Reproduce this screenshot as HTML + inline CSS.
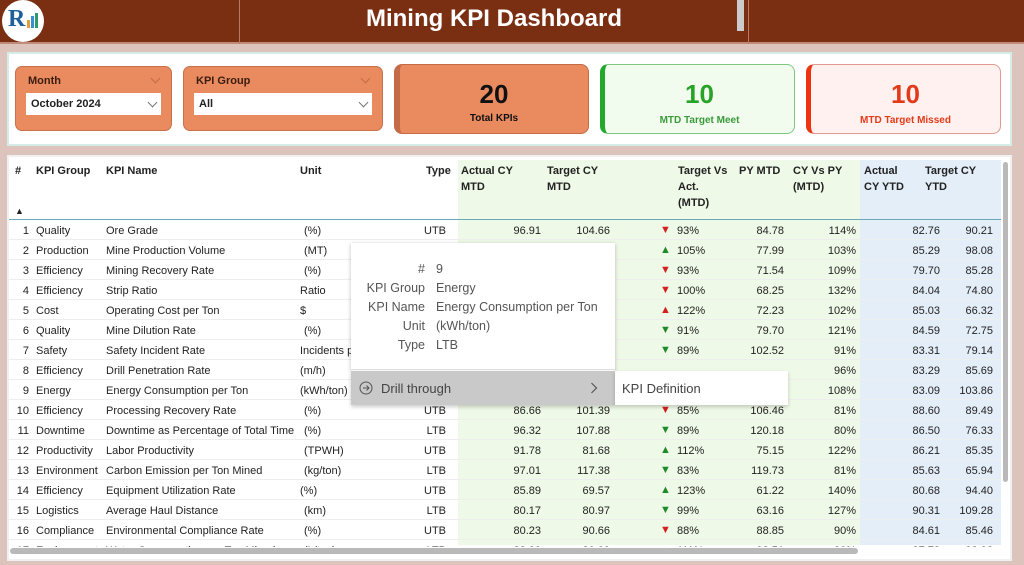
<!DOCTYPE html>
<html><head><meta charset="utf-8"><style>
*{margin:0;padding:0;box-sizing:border-box}
body{width:1024px;height:565px;overflow:hidden;background:#dcc3bc;font-family:"Liberation Sans",sans-serif;position:relative;color:#222}
.a{position:absolute}
.hdr{left:0;top:0;width:1024px;height:44px;background:#7a2e12;border-bottom:2px solid #c08a78}
.title{left:240px;width:508px;top:5px;text-align:center;color:#fff;font-weight:bold;font-size:24px}
.panel{background:#fff;border:2px solid #d6ece9}
.sl{background:#e98b5f;border:1px solid #c7714a;border-radius:7px}
.sl .lb{position:absolute;left:12px;top:8px;font-size:11px;font-weight:bold;color:#3a1c10}
.sl .dd{position:absolute;left:10px;top:26px;background:#fff;height:22px;font-size:11px;font-weight:bold;padding:5px 5px}
.chev{position:absolute;width:7px;height:7px;border-right:1.3px solid #777;border-bottom:1.3px solid #777;transform:rotate(45deg)}
.card{border-radius:8px;text-align:center}
.big{font-size:26px;font-weight:bold;position:absolute;left:0;right:0;top:14px}
.sm{font-size:10px;font-weight:bold;position:absolute;left:0;right:0;top:50px}
.row{position:absolute;left:9px;width:992px;height:20px;border-bottom:1px solid #eee;font-size:11px}
.row span{position:absolute;top:5px;white-space:nowrap}
.r{text-align:right}
.th{font-size:11px;font-weight:bold;line-height:16px;color:#222}
.up,.dng{color:#1e8a2a}.upr,.dn{color:#d32020}
.row span.up,.row span.dng,.row span.upr,.row span.dn{font-size:11px;top:4px}
</style></head><body>
<div class="a hdr"></div>
<div class="a" style="left:239px;top:0;width:1px;height:44px;background:#b87a64"></div>
<div class="a" style="left:748px;top:0;width:1px;height:44px;background:#b87a64"></div>
<div class="a" style="left:737px;top:0;width:7px;height:31px;background:#ccc"></div>
<div class="a" style="left:2px;top:0;width:42px;height:42px;border-radius:50%;background:#fff"></div>
<div class="a" style="left:8px;top:6px;font:bold 24px 'Liberation Serif',serif;color:#1f5f9c">R</div>
<div class="a" style="left:27px;top:20px;width:3px;height:8px;background:#e2a23a"></div>
<div class="a" style="left:31px;top:16px;width:3px;height:12px;background:#3a8fd0"></div>
<div class="a" style="left:35px;top:13px;width:3px;height:15px;background:#2c9a6d"></div>
<div class="a title">Mining KPI Dashboard</div>

<div class="a panel" style="left:7px;top:52px;width:1005px;height:94px"></div>
<div class="a sl" style="left:15px;top:66px;width:157px;height:65px"><div class="lb">Month</div><div class="chev" style="left:136px;top:8px;border-color:#c46a45"></div><div class="dd" style="width:135px">October 2024</div><div class="chev" style="left:133px;top:32px"></div></div>
<div class="a sl" style="left:183px;top:66px;width:200px;height:65px"><div class="lb">KPI Group</div><div class="chev" style="left:178px;top:8px;border-color:#c46a45"></div><div class="dd" style="width:178px">All</div><div class="chev" style="left:176px;top:32px"></div></div>
<div class="a card" style="left:394px;top:64px;width:195px;height:70px;background:#e98b5f;border:1px solid #c26b46;border-left:6px solid #c26b46"><div class="big" style="color:#111">20</div><div class="sm" style="top:48px;color:#111">Total KPIs</div></div>
<div class="a card" style="left:600px;top:64px;width:195px;height:70px;background:#f1fcef;border:1px solid #7fc77f;border-left:5px solid #22a82a"><div class="big" style="color:#27a327">10</div><div class="sm" style="color:#3a9a3a">MTD Target Meet</div></div>
<div class="a card" style="left:806px;top:64px;width:195px;height:70px;background:#fef1ef;border:1px solid #e29a90;border-left:5px solid #ee3311"><div class="big" style="color:#e33a1a">10</div><div class="sm" style="color:#e33a1a">MTD Target Missed</div></div>

<div class="a panel" style="left:7px;top:155px;width:1005px;height:406px;border-color:#f0f0f0"></div>
<div class="a" style="left:458px;top:160px;width:402px;height:385px;background:#eff9e7"></div>
<div class="a" style="left:860px;top:160px;width:141px;height:385px;background:#e4eef8"></div>
<div class="a th" style="left:15px;top:163px">#</div>
<div class="a th" style="left:36px;top:163px">KPI Group</div>
<div class="a th" style="left:106px;top:163px">KPI Name</div>
<div class="a th" style="left:300px;top:163px">Unit</div>
<div class="a th" style="left:426px;top:163px">Type</div>
<div class="a th" style="left:461px;top:163px">Actual CY<br>MTD</div>
<div class="a th" style="left:547px;top:163px">Target CY<br>MTD</div>
<div class="a th" style="left:678px;top:163px">Target Vs<br>Act.<br>(MTD)</div>
<div class="a th" style="left:739px;top:163px">PY MTD</div>
<div class="a th" style="left:793px;top:163px">CY Vs PY<br>(MTD)</div>
<div class="a th" style="left:864px;top:163px">Actual<br>CY YTD</div>
<div class="a th" style="left:925px;top:163px">Target CY<br>YTD</div>
<div class="a" style="left:15px;top:206px;font-size:9px">▲</div>
<div class="a" style="left:9px;top:219px;width:992px;height:1px;background:#6aa7b8"></div>

<div class="row" style="top:220px"><span class="r" style="left:0;width:20px">1</span><span style="left:27px">Quality</span><span style="left:97px">Ore Grade</span><span style="left:295px">(%)</span><span class="r" style="left:400px;width:37px">UTB</span><span class="r" style="left:460px;width:72px">96.91</span><span class="r" style="left:530px;width:71px">104.66</span><span class="dn" style="left:651px">▼</span><span style="left:668px">93%</span><span class="r" style="left:700px;width:75px">84.78</span><span class="r" style="left:780px;width:67px">114%</span><span class="r" style="left:860px;width:71px">82.76</span><span class="r" style="left:920px;width:64px">90.21</span></div>
<div class="row" style="top:240px"><span class="r" style="left:0;width:20px">2</span><span style="left:27px">Production</span><span style="left:97px">Mine Production Volume</span><span style="left:295px">(MT)</span><span class="up" style="left:651px">▲</span><span style="left:668px">105%</span><span class="r" style="left:700px;width:75px">77.99</span><span class="r" style="left:780px;width:67px">103%</span><span class="r" style="left:860px;width:71px">85.29</span><span class="r" style="left:920px;width:64px">98.08</span></div>
<div class="row" style="top:260px"><span class="r" style="left:0;width:20px">3</span><span style="left:27px">Efficiency</span><span style="left:97px">Mining Recovery Rate</span><span style="left:295px">(%)</span><span class="dn" style="left:651px">▼</span><span style="left:668px">93%</span><span class="r" style="left:700px;width:75px">71.54</span><span class="r" style="left:780px;width:67px">109%</span><span class="r" style="left:860px;width:71px">79.70</span><span class="r" style="left:920px;width:64px">85.28</span></div>
<div class="row" style="top:280px"><span class="r" style="left:0;width:20px">4</span><span style="left:27px">Efficiency</span><span style="left:97px">Strip Ratio</span><span style="left:291px">Ratio</span><span class="dn" style="left:651px">▼</span><span style="left:668px">100%</span><span class="r" style="left:700px;width:75px">68.25</span><span class="r" style="left:780px;width:67px">132%</span><span class="r" style="left:860px;width:71px">84.04</span><span class="r" style="left:920px;width:64px">74.80</span></div>
<div class="row" style="top:300px"><span class="r" style="left:0;width:20px">5</span><span style="left:27px">Cost</span><span style="left:97px">Operating Cost per Ton</span><span style="left:291px">$</span><span class="upr" style="left:651px">▲</span><span style="left:668px">122%</span><span class="r" style="left:700px;width:75px">72.23</span><span class="r" style="left:780px;width:67px">102%</span><span class="r" style="left:860px;width:71px">85.03</span><span class="r" style="left:920px;width:64px">66.32</span></div>
<div class="row" style="top:320px"><span class="r" style="left:0;width:20px">6</span><span style="left:27px">Quality</span><span style="left:97px">Mine Dilution Rate</span><span style="left:295px">(%)</span><span class="dng" style="left:651px">▼</span><span style="left:668px">91%</span><span class="r" style="left:700px;width:75px">79.70</span><span class="r" style="left:780px;width:67px">121%</span><span class="r" style="left:860px;width:71px">84.59</span><span class="r" style="left:920px;width:64px">72.75</span></div>
<div class="row" style="top:340px"><span class="r" style="left:0;width:20px">7</span><span style="left:27px">Safety</span><span style="left:97px">Safety Incident Rate</span><span style="left:291px">Incidents p</span><span class="dng" style="left:651px">▼</span><span style="left:668px">89%</span><span class="r" style="left:700px;width:75px">102.52</span><span class="r" style="left:780px;width:67px">91%</span><span class="r" style="left:860px;width:71px">83.31</span><span class="r" style="left:920px;width:64px">79.14</span></div>
<div class="row" style="top:360px"><span class="r" style="left:0;width:20px">8</span><span style="left:27px">Efficiency</span><span style="left:97px">Drill Penetration Rate</span><span style="left:291px">(m/h)</span><span class="r" style="left:780px;width:67px">96%</span><span class="r" style="left:860px;width:71px">83.29</span><span class="r" style="left:920px;width:64px">85.69</span></div>
<div class="row" style="top:380px"><span class="r" style="left:0;width:20px">9</span><span style="left:27px">Energy</span><span style="left:97px">Energy Consumption per Ton</span><span style="left:291px">(kWh/ton)</span><span class="r" style="left:780px;width:67px">108%</span><span class="r" style="left:860px;width:71px">83.09</span><span class="r" style="left:920px;width:64px">103.86</span></div>
<div class="row" style="top:400px"><span class="r" style="left:0;width:20px">10</span><span style="left:27px">Efficiency</span><span style="left:97px">Processing Recovery Rate</span><span style="left:295px">(%)</span><span class="r" style="left:400px;width:37px">UTB</span><span class="r" style="left:460px;width:72px">86.66</span><span class="r" style="left:530px;width:71px">101.39</span><span class="dn" style="left:651px">▼</span><span style="left:668px">85%</span><span class="r" style="left:700px;width:75px">106.46</span><span class="r" style="left:780px;width:67px">81%</span><span class="r" style="left:860px;width:71px">88.60</span><span class="r" style="left:920px;width:64px">89.49</span></div>
<div class="row" style="top:420px"><span class="r" style="left:0;width:20px">11</span><span style="left:27px">Downtime</span><span style="left:97px">Downtime as Percentage of Total Time</span><span style="left:295px">(%)</span><span class="r" style="left:400px;width:37px">LTB</span><span class="r" style="left:460px;width:72px">96.32</span><span class="r" style="left:530px;width:71px">107.88</span><span class="dng" style="left:651px">▼</span><span style="left:668px">89%</span><span class="r" style="left:700px;width:75px">120.18</span><span class="r" style="left:780px;width:67px">80%</span><span class="r" style="left:860px;width:71px">86.50</span><span class="r" style="left:920px;width:64px">76.33</span></div>
<div class="row" style="top:440px"><span class="r" style="left:0;width:20px">12</span><span style="left:27px">Productivity</span><span style="left:97px">Labor Productivity</span><span style="left:295px">(TPWH)</span><span class="r" style="left:400px;width:37px">UTB</span><span class="r" style="left:460px;width:72px">91.78</span><span class="r" style="left:530px;width:71px">81.68</span><span class="up" style="left:651px">▲</span><span style="left:668px">112%</span><span class="r" style="left:700px;width:75px">75.15</span><span class="r" style="left:780px;width:67px">122%</span><span class="r" style="left:860px;width:71px">86.21</span><span class="r" style="left:920px;width:64px">85.35</span></div>
<div class="row" style="top:460px"><span class="r" style="left:0;width:20px">13</span><span style="left:27px">Environment</span><span style="left:97px">Carbon Emission per Ton Mined</span><span style="left:295px">(kg/ton)</span><span class="r" style="left:400px;width:37px">LTB</span><span class="r" style="left:460px;width:72px">97.01</span><span class="r" style="left:530px;width:71px">117.38</span><span class="dng" style="left:651px">▼</span><span style="left:668px">83%</span><span class="r" style="left:700px;width:75px">119.73</span><span class="r" style="left:780px;width:67px">81%</span><span class="r" style="left:860px;width:71px">85.63</span><span class="r" style="left:920px;width:64px">65.94</span></div>
<div class="row" style="top:480px"><span class="r" style="left:0;width:20px">14</span><span style="left:27px">Efficiency</span><span style="left:97px">Equipment Utilization Rate</span><span style="left:291px">(%)</span><span class="r" style="left:400px;width:37px">UTB</span><span class="r" style="left:460px;width:72px">85.89</span><span class="r" style="left:530px;width:71px">69.57</span><span class="up" style="left:651px">▲</span><span style="left:668px">123%</span><span class="r" style="left:700px;width:75px">61.22</span><span class="r" style="left:780px;width:67px">140%</span><span class="r" style="left:860px;width:71px">80.68</span><span class="r" style="left:920px;width:64px">94.40</span></div>
<div class="row" style="top:500px"><span class="r" style="left:0;width:20px">15</span><span style="left:27px">Logistics</span><span style="left:97px">Average Haul Distance</span><span style="left:295px">(km)</span><span class="r" style="left:400px;width:37px">LTB</span><span class="r" style="left:460px;width:72px">80.17</span><span class="r" style="left:530px;width:71px">80.97</span><span class="dng" style="left:651px">▼</span><span style="left:668px">99%</span><span class="r" style="left:700px;width:75px">63.16</span><span class="r" style="left:780px;width:67px">127%</span><span class="r" style="left:860px;width:71px">90.31</span><span class="r" style="left:920px;width:64px">109.28</span></div>
<div class="row" style="top:520px"><span class="r" style="left:0;width:20px">16</span><span style="left:27px">Compliance</span><span style="left:97px">Environmental Compliance Rate</span><span style="left:295px">(%)</span><span class="r" style="left:400px;width:37px">UTB</span><span class="r" style="left:460px;width:72px">80.23</span><span class="r" style="left:530px;width:71px">90.66</span><span class="dn" style="left:651px">▼</span><span style="left:668px">88%</span><span class="r" style="left:700px;width:75px">88.85</span><span class="r" style="left:780px;width:67px">90%</span><span class="r" style="left:860px;width:71px">84.61</span><span class="r" style="left:920px;width:64px">85.46</span></div>
<div class="row" style="top:540px;height:7px;overflow:hidden;border:0"><span class="r" style="left:0;width:20px">17</span><span style="left:27px">Environment</span><span style="left:97px">Water Consumption per Ton Mined</span><span style="left:295px">(L/ton)</span><span class="r" style="left:400px;width:37px">LTB</span><span class="r" style="left:460px;width:72px">88.99</span><span class="r" style="left:530px;width:71px">80.09</span><span class="upr" style="left:651px">▲</span><span style="left:668px">111%</span><span class="r" style="left:700px;width:75px">98.51</span><span class="r" style="left:780px;width:67px">90%</span><span class="r" style="left:860px;width:71px">87.78</span><span class="r" style="left:920px;width:64px">93.92</span></div>
<div class="a" style="left:9px;top:547px;width:992px;height:12px;background:#fff"></div>
<div class="a" style="left:10px;top:548px;width:848px;height:6px;border-radius:3px;background:#b9b9b9"></div>
<div class="a" style="left:1003px;top:162px;width:5px;height:320px;border-radius:3px;background:#b9b9b9"></div>

<div class="a" style="left:351px;top:243px;width:264px;height:128px;background:#fff;box-shadow:0 1px 4px rgba(0,0,0,.25)"></div>
<div class="a" style="left:351px;top:243px;width:74px;font-size:12.5px;color:#555;text-align:right;line-height:19px;padding-top:17px">#<br>KPI Group<br>KPI Name<br>Unit<br>Type</div>
<div class="a" style="left:436px;top:243px;font-size:12.5px;color:#555;line-height:19px;padding-top:17px">9<br>Energy<br>Energy Consumption per Ton<br>(kWh/ton)<br>LTB</div>
<div class="a" style="left:351px;top:369px;width:264px;height:1px;background:#ddd"></div>
<div class="a" style="left:351px;top:371px;width:264px;height:34px;background:#c9c9c9;box-shadow:0 2px 4px rgba(0,0,0,.2)"></div>
<svg class="a" style="left:359px;top:381px" width="14" height="14" viewBox="0 0 14 14"><circle cx="7" cy="7" r="6" fill="none" stroke="#555" stroke-width="1"/><path d="M4 7h6M7.5 4.5L10 7l-2.5 2.5" fill="none" stroke="#555" stroke-width="1"/></svg>
<div class="a" style="left:381px;top:381px;font-size:13px;color:#444">Drill through</div>
<svg class="a" style="left:590px;top:382px" width="8" height="12" viewBox="0 0 8 12"><path d="M1.5 1l5 5-5 5" fill="none" stroke="#555" stroke-width="1.2"/></svg>
<div class="a" style="left:615px;top:371px;width:173px;height:34px;background:#fff;box-shadow:0 2px 4px rgba(0,0,0,.2)"></div>
<div class="a" style="left:622px;top:381px;font-size:13px;color:#444">KPI Definition</div>
</body></html>
